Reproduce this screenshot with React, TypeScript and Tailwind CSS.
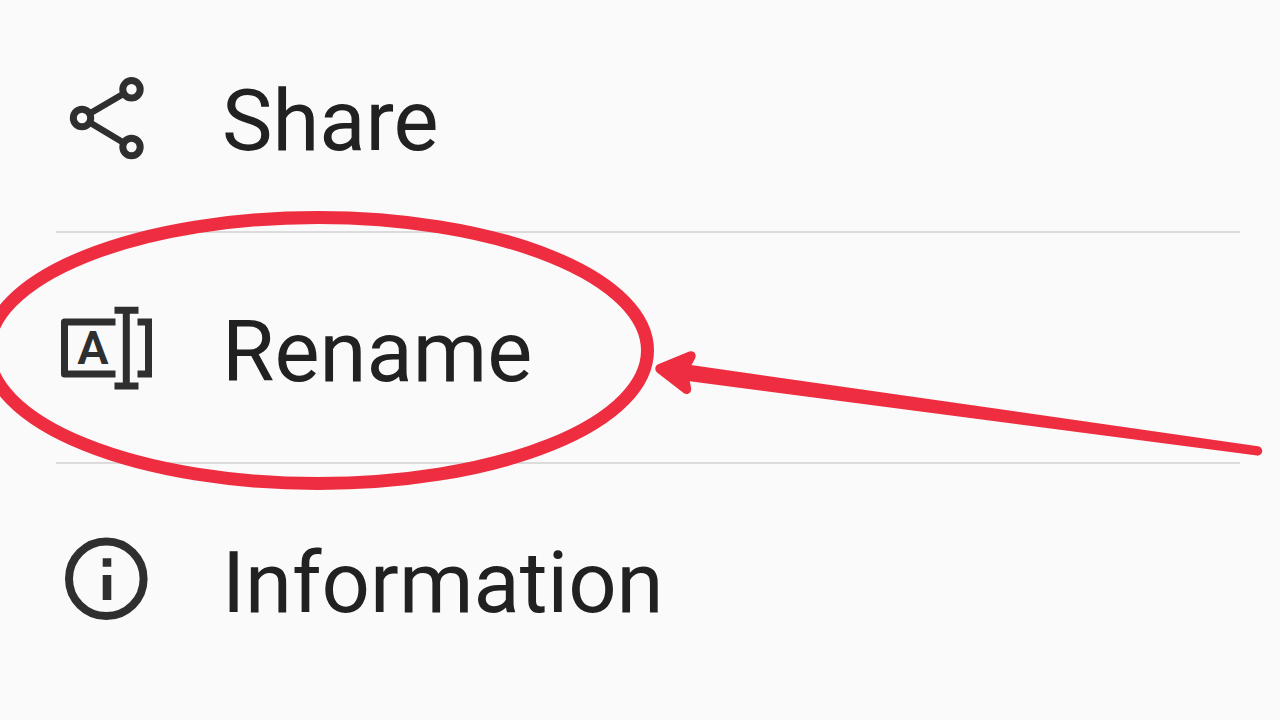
import type { ReactNode } from 'react';

interface MenuItem {
  label: string;
  icon: ReactNode;
}

const iconClass = 'size-[100px] shrink-0 text-[#2f2f2f]';

function ShareIcon() {
  return (
    <svg viewBox="0 0 100 100" className={iconClass} fill="none" stroke="currentColor" aria-hidden="true">
      <path d="M33 47 L68 26.5 M33 55 L68 76" strokeWidth="6.5" />
      <g strokeWidth="7">
        <circle cx="26" cy="51" r="8.7" />
        <circle cx="75.5" cy="22.3" r="8.7" />
        <circle cx="75.5" cy="80" r="8.7" />
      </g>
    </svg>
  );
}

function RenameIcon() {
  return (
    <svg viewBox="0 0 100 100" className={iconClass} fill="none" stroke="currentColor" strokeWidth="7" aria-hidden="true">
      <path d="M59.5 24 H8.5 V76 H59.5" strokeLinejoin="round" />
      <path d="M81.5 24 H92.5 V76 H81.5" />
      <path d="M58.5 12.3 H82.5 M58.5 88 H82.5 M70.3 12 V88" />
      <text
        x="37"
        y="66"
        textAnchor="middle"
        fill="currentColor"
        stroke="none"
        className="font-['Roboto',sans-serif] text-[47px] font-semibold"
      >
        A
      </text>
    </svg>
  );
}

function InfoIcon() {
  return (
    <svg viewBox="0 0 100 100" className={iconClass} fill="none" stroke="currentColor" aria-hidden="true">
      <circle cx="50.3" cy="49.7" r="37.3" strokeWidth="8" />
      <path d="M51 29.3 V37.7 M51 46 V71" strokeWidth="8.6" />
    </svg>
  );
}

const items: MenuItem[] = [
  { label: 'Share', icon: <ShareIcon /> },
  { label: 'Rename', icon: <RenameIcon /> },
  { label: 'Information', icon: <InfoIcon /> },
];

// Red ellipse and arrow pointing at the Rename entry
function Highlight() {
  return (
    <svg
      width="1280"
      height="720"
      viewBox="0 0 1280 720"
      className="pointer-events-none absolute left-0 top-0 text-[#ee2d40]"
      aria-hidden="true"
    >
      <ellipse cx="318" cy="350.5" rx="329.5" ry="133" fill="none" stroke="currentColor" strokeWidth="13" />
      <path
        d="M660 368.7 L691 356 L684 369 L684 377 L686.5 389.3 Z"
        fill="currentColor"
        stroke="currentColor"
        strokeWidth="9.5"
        strokeLinejoin="round"
      />
      <path d="M684 364 L1258 446.2 A4.7 4.7 0 0 1 1257 455.6 L684 380.6 Z" fill="currentColor" />
    </svg>
  );
}

export default function App() {
  return (
    <main className="relative min-h-screen overflow-hidden bg-[#fafafa] font-['Roboto',sans-serif]">
      <ul className="pl-14 pr-10 pt-[2px]">
        {items.map((item) => (
          <li key={item.label} className="border-b-2 border-[#dcdcdc] pt-px last:border-b-0">
            <button type="button" className="flex h-[228px] w-full items-center gap-[66px] text-left">
              {item.icon}
              <span className="pt-2 text-[85px] leading-[100px] text-[#212121]">{item.label}</span>
            </button>
          </li>
        ))}
      </ul>
      <Highlight />
    </main>
  );
}
